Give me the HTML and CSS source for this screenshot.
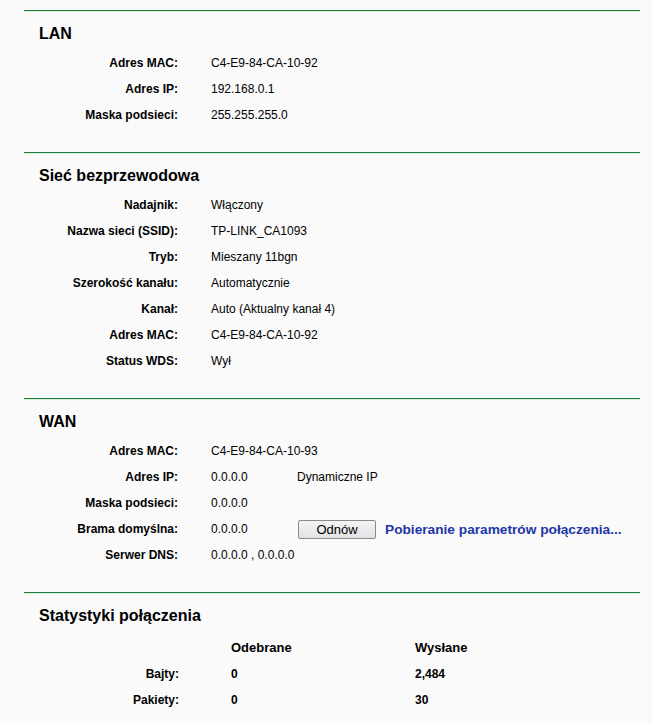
FILE: index.html
```html
<!DOCTYPE html>
<html lang="pl">
<head>
<meta charset="utf-8">
<title>Stan</title>
<link rel="stylesheet" href="styles.css">
</head>
<body>
<div class="page">
  <section class="section">
    <h2 class="title">LAN</h2>
    <div class="rows">
      <div class="row"><span class="label">Adres MAC:</span><span class="value">C4-E9-84-CA-10-92</span></div>
      <div class="row"><span class="label">Adres IP:</span><span class="value">192.168.0.1</span></div>
      <div class="row"><span class="label">Maska podsieci:</span><span class="value">255.255.255.0</span></div>
    </div>
  </section>
  <section class="section">
    <h2 class="title">Sieć bezprzewodowa</h2>
    <div class="rows">
      <div class="row"><span class="label">Nadajnik:</span><span class="value">Włączony</span></div>
      <div class="row"><span class="label">Nazwa sieci (SSID):</span><span class="value">TP-LINK_CA1093</span></div>
      <div class="row"><span class="label">Tryb:</span><span class="value">Mieszany 11bgn</span></div>
      <div class="row"><span class="label">Szerokość kanału:</span><span class="value">Automatycznie</span></div>
      <div class="row"><span class="label">Kanał:</span><span class="value">Auto (Aktualny kanał 4)</span></div>
      <div class="row"><span class="label">Adres MAC:</span><span class="value">C4-E9-84-CA-10-92</span></div>
      <div class="row"><span class="label">Status WDS:</span><span class="value">Wył</span></div>
    </div>
  </section>
  <section class="section">
    <h2 class="title">WAN</h2>
    <div class="rows">
      <div class="row"><span class="label">Adres MAC:</span><span class="value">C4-E9-84-CA-10-93</span></div>
      <div class="row"><span class="label">Adres IP:</span><span class="value value-short">0.0.0.0</span><span class="value">Dynamiczne IP</span></div>
      <div class="row"><span class="label">Maska podsieci:</span><span class="value">0.0.0.0</span></div>
      <div class="row"><span class="label">Brama domyślna:</span><span class="value value-short">0.0.0.0</span><button class="btn" type="button">Odnów</button><span class="status">Pobieranie parametrów połączenia...</span></div>
      <div class="row"><span class="label">Serwer DNS:</span><span class="value">0.0.0.0 , 0.0.0.0</span></div>
    </div>
  </section>
  <section class="section">
    <h2 class="title">Statystyki połączenia</h2>
    <div class="rows stats">
      <div class="row row-head"><span class="label"></span><span class="col col-head">Odebrane</span><span class="col col-head">Wysłane</span></div>
      <div class="row"><span class="label">Bajty:</span><span class="col">0</span><span class="col">2,484</span></div>
      <div class="row"><span class="label">Pakiety:</span><span class="col">0</span><span class="col">30</span></div>
    </div>
  </section>
</div>
</body>
</html>
```
FILE: styles.css
```css
html, body {
  margin: 0;
  padding: 0;
  background: #fafafa;
}
body {
  font-family: "Liberation Sans", Arial, sans-serif;
  font-size: 12px;
  color: #000;
}
.page {
  padding: 10px 12px 0 24px;
}
.section {
  border-top: 1px solid #1a7f3a;
  box-shadow: inset 0 1px 0 #d8ead9;
  padding: 12px 0 24px 0;
}
.title {
  margin: 0 0 5px 0;
  padding-left: 15px;
  font-size: 16px;
  font-weight: bold;
  line-height: 22px;
  color: #000;
}
.row {
  display: flex;
  align-items: center;
  height: 26px;
}
.label {
  width: 154px;
  flex: none;
  text-align: right;
  font-weight: bold;
  margin-right: 33px;
}
.value-short {
  width: 86px;
  flex: none;
}
.btn {
  font-family: "Liberation Sans", Arial, sans-serif;
  font-size: 13px;
  width: 78px;
  height: 19px;
  padding: 0;
  margin: 0 9px 0 1px;
  border: 1px solid #8a8a8a;
  border-radius: 2px;
  background: linear-gradient(#f4f4f4, #e2e2e2);
  color: #000;
  line-height: 17px;
}
.status {
  color: #1c36a8;
  font-weight: bold;
  font-size: 13.7px;
}
.stats {
  margin-top: 7px;
}
.stats .row-head {
  height: 27px;
}
.stats .label {
  margin-right: 0;
  width: 155px;
}
.col {
  font-weight: bold;
  margin-left: 52px;
  width: 184px;
  flex: none;
}
.col + .col {
  margin-left: 0;
}
.col-head {
  font-size: 13px;
}
```
